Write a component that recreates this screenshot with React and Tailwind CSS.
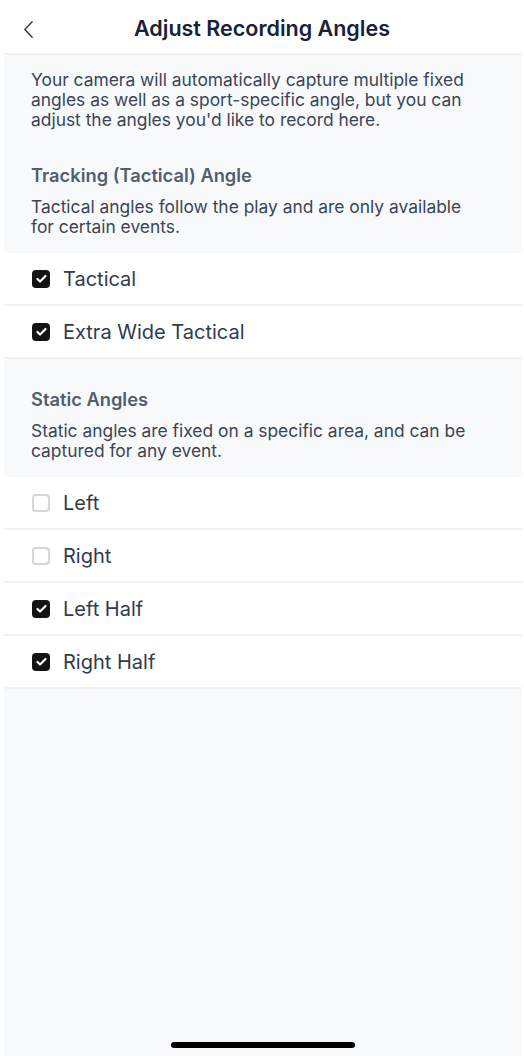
import { useState } from 'react'

function Check({ checked }) {
  if (!checked) {
    return <span className="block h-[18px] w-[18px] rounded-[4px] border-2 border-[#d3d6db] bg-white" />
  }
  return (
    <span className="flex h-[18px] w-[18px] items-center justify-center rounded-[4px] bg-[#141414]">
      <svg viewBox="0 0 16 16" className="h-[13px] w-[13px]" fill="none" stroke="white" strokeWidth="2.6" strokeLinecap="round" strokeLinejoin="round">
        <path d="M3 8.5l3.2 3.2L13 4.8" />
      </svg>
    </span>
  )
}

function Row({ label, checked, onToggle }) {
  return (
    <button
      onClick={onToggle}
      className="flex h-[53px] w-full items-center gap-[13px] border-b-2 border-[#f1f2f4] bg-white pl-[28px] text-left"
    >
      <Check checked={checked} />
      <span className="text-[20px] text-[#2f3b4f]">{label}</span>
    </button>
  )
}

function Section({ title, desc, top }) {
  return (
    <div className={`pl-[27px] pr-[40px] pb-[16px] ${top}`}>
      <h2 className="text-[18.3px] font-semibold leading-[22px] text-[#525d70]">{title}</h2>
      <p className="mt-[11px] text-[17.4px] leading-[20px] text-[#3b4556]">{desc}</p>
    </div>
  )
}

export default function App() {
  const [angles, setAngles] = useState({
    tactical: true,
    extraWide: true,
    left: false,
    right: false,
    leftHalf: true,
    rightHalf: true,
  })
  const toggle = (k) => setAngles((a) => ({ ...a, [k]: !a[k] }))

  return (
    <div className="flex h-[1056px] flex-col bg-white font-['Inter','Noto_Sans',sans-serif]">
      <header className="relative flex h-[53px] shrink-0 items-center justify-center">
        <button className="absolute left-[19px] top-[16px] p-1 text-[#2f3b4f]">
          <svg viewBox="0 0 12 20" className="h-[19px] w-[11px]" fill="none" stroke="currentColor" strokeWidth="1.6" strokeLinecap="round" strokeLinejoin="round">
            <path d="M10 1.5L2 10l8 8.5" />
          </svg>
        </button>
        <h1 className="mt-[3px] text-[21.5px] font-semibold text-[#17223a]">Adjust Recording Angles</h1>
      </header>

      <main className="ml-[4px] mr-[2px] flex flex-1 flex-col border-t-2 border-[#f1f2f4] bg-[#f8f9fb]">
        <p className="pl-[27px] pr-[36px] pt-[15px] text-[17.4px] leading-[20px] text-[#3b4556]">
          Your camera will automatically capture multiple fixed angles as well as a sport-specific angle, but you can adjust the angles you'd like to record here.
        </p>

        <Section
          top="pt-[34px]"
          title="Tracking (Tactical) Angle"
          desc="Tactical angles follow the play and are only available for certain events."
        />
        <Row label="Tactical" checked={angles.tactical} onToggle={() => toggle('tactical')} />
        <Row label="Extra Wide Tactical" checked={angles.extraWide} onToggle={() => toggle('extraWide')} />

        <Section
          top="pt-[29px]"
          title="Static Angles"
          desc="Static angles are fixed on a specific area, and can be captured for any event."
        />
        <Row label="Left" checked={angles.left} onToggle={() => toggle('left')} />
        <Row label="Right" checked={angles.right} onToggle={() => toggle('right')} />
        <Row label="Left Half" checked={angles.leftHalf} onToggle={() => toggle('leftHalf')} />
        <Row label="Right Half" checked={angles.rightHalf} onToggle={() => toggle('rightHalf')} />

        <div className="mt-auto flex justify-center pb-[8px]">
          <span className="block h-[6px] w-[184px] rounded-full bg-black" />
        </div>
      </main>
    </div>
  )
}
